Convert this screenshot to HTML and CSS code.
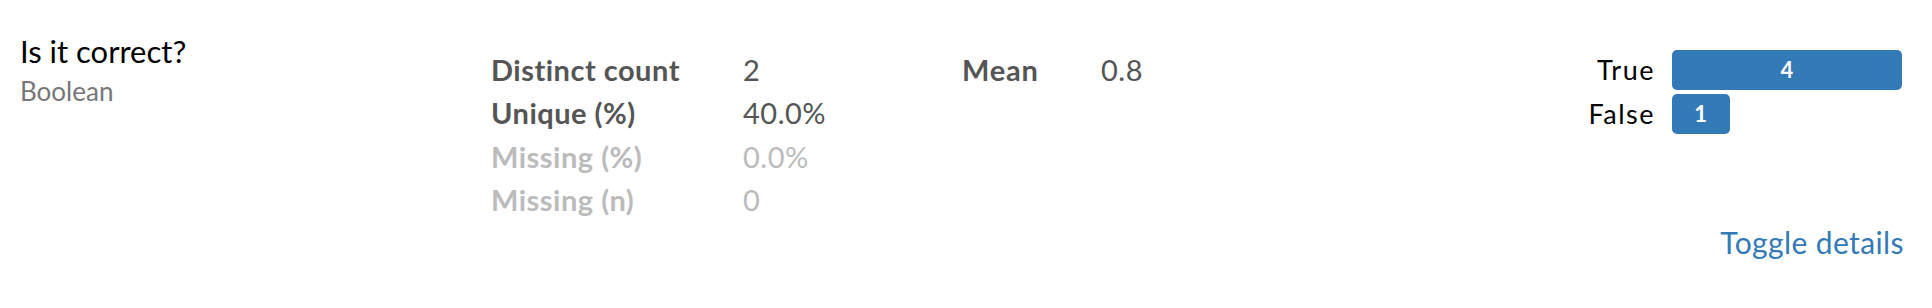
FILE: index.html
```html
<!DOCTYPE html>
<html lang="en">
<head>
<meta charset="utf-8">
<title>Variable: Is it correct?</title>
<link rel="stylesheet" href="styles.css">
</head>
<body>
<div class="variable">
  <div class="variable-row">
    <div class="name-col">
      <p class="var-name">Is it correct?</p>
      <p class="var-type">Boolean</p>
    </div>
    <div class="stats-col">
      <table class="stats stats-main">
        <tr><th>Distinct count</th><td>2</td></tr>
        <tr><th>Unique (%)</th><td>40.0%</td></tr>
        <tr class="ignore"><th>Missing (%)</th><td>0.0%</td></tr>
        <tr class="ignore"><th>Missing (n)</th><td>0</td></tr>
      </table>
      <table class="stats stats-extra">
        <tr><th>Mean</th><td>0.8</td></tr>
      </table>
    </div>
    <div class="freq-col">
      <table class="freq">
        <tr>
          <th>True</th>
          <td><div class="bar-track"><div class="bar" style="width: 100%">4</div></div></td>
        </tr>
        <tr>
          <th>False</th>
          <td><div class="bar-track"><div class="bar" style="width: 25%">1</div></div></td>
        </tr>
      </table>
    </div>
  </div>
  <div class="toggle-row">
    <a class="toggle" href="#details">Toggle details</a>
  </div>
</div>
</body>
</html>
```

FILE: styles.css
```css
html, body {
  margin: 0;
  padding: 0;
  background: #ffffff;
}

body {
  font-family: "Lato", "Noto Sans", sans-serif;
  color: #555555;
}

.variable {
  width: 1932px;
}

.variable-row {
  display: flex;
  align-items: flex-start;
  padding-left: 20px;
  padding-top: 32px;
}

.name-col {
  width: 471px;
  flex: none;
}

.var-name {
  margin: 0;
  font-size: 31px;
  line-height: 38px;
  color: #000000;
}

.var-type {
  margin: 4.6px 0 0;
  font-size: 26px;
  line-height: 32px;
  color: #777777;
}

.stats-col {
  display: flex;
  align-items: flex-start;
  margin-top: 16px;
  flex: none;
}

.stats {
  border-collapse: collapse;
  font-size: 29px;
  letter-spacing: 0.5px;
  line-height: 43.3px;
}

.stats th,
.stats td {
  padding: 0;
  text-align: left;
  vertical-align: top;
  white-space: nowrap;
}

.stats th {
  font-weight: 700;
  color: #555555;
}

.stats td {
  font-weight: 400;
  color: #555555;
}

.stats-main {
  width: 471px;
}

.stats-main th {
  width: 252px;
}

.stats-extra th {
  width: 139px;
}

.stats-extra th {
  letter-spacing: 0.8px;
}

.stats tr.ignore th,
.stats tr.ignore td {
  color: #bbbbbb;
}

.freq-col {
  margin-left: auto;
  margin-right: 30px;
  margin-top: 18px;
  flex: none;
}

.freq {
  border-collapse: separate;
  border-spacing: 0 4px;
  margin-top: -4px;
}

.freq th {
  padding: 0 17px 0 0;
  font-size: 27px;
  letter-spacing: 1.5px;
  line-height: 40px;
  font-weight: 400;
  color: #000000;
  text-align: right;
  white-space: nowrap;
}

.freq td {
  padding: 0;
  width: 230px;
}

.bar-track {
  width: 230px;
}

.bar {
  height: 40px;
  background: #337ab7;
  border-radius: 5px;
  color: #ffffff;
  font-size: 22px;
  font-weight: 700;
  line-height: 40px;
  text-align: center;
}

.toggle-row {
  display: flex;
  justify-content: flex-end;
  padding-right: 28px;
  margin-top: 1px;
}

.toggle {
  font-size: 30px;
  letter-spacing: 0.4px;
  line-height: 40px;
  color: #337ab7;
  text-decoration: none;
}
```
